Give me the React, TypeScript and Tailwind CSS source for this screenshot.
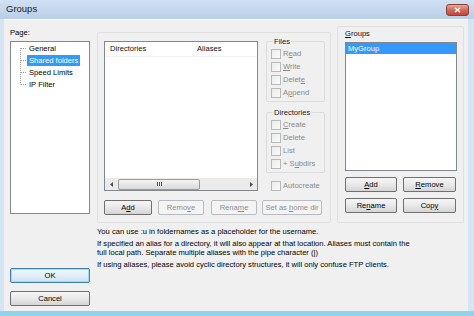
import React from 'react';

type Kids = { children: React.ReactNode };

function U({ children }: Kids) {
  return <span className="underline decoration-[0.5px] underline-offset-[1px]">{children}</span>;
}

function Btn({ children, disabled, main, className = '' }: Kids & { disabled?: boolean; main?: boolean; className?: string }) {
  let look = 'border-[#707070] bg-gradient-to-b from-[#f6f6f6] via-[#e9e9e9] to-[#d5d5d5] text-[#000]';
  if (disabled) look = 'border-[#b9bcbf] bg-[#f4f4f4] text-[#8d8d8d]';
  if (main) look = 'border-[#3c7fb1] bg-gradient-to-b from-[#eef7fd] via-[#e0eef8] to-[#cfe3f3] text-[#000] shadow-[inset_0_0_0_1px_#9fdcf7]';
  return (
    <div className={`flex items-center justify-center h-[15px] rounded-[2px] border leading-[13px] ${look} ${className}`}>
      <span className="whitespace-nowrap">{children}</span>
    </div>
  );
}

function Check({ label }: { label: React.ReactNode }) {
  return (
    <div className="flex items-center h-[13px]">
      <div className="w-[10px] h-[10px] border border-[#b8b8b8] bg-gradient-to-br from-[#ececec] to-[#fafafa]" />
      <span className="ml-[2px] text-[#8a8a8a] whitespace-nowrap">{label}</span>
    </div>
  );
}

function TreeRow({ label, selected, first, last }: { label: string; selected?: boolean; first?: boolean; last?: boolean }) {
  return (
    <div className="flex items-center h-[12px]">
      <svg width="16" height="12" className="shrink-0">
        <line x1="9.5" y1={first ? 6 : 0} x2="9.5" y2={last ? 6.5 : 12} stroke="#a0a0a0" strokeDasharray="1 1" />
        <line x1="10" y1="6.5" x2="16" y2="6.5" stroke="#a0a0a0" strokeDasharray="1 1" />
      </svg>
      <span
        className={`h-[11px] leading-[11px] px-[2px] whitespace-nowrap ${selected ? 'bg-[#3399ff] text-white' : 'text-[#000]'}`}
      >
        {label}
      </span>
    </div>
  );
}

function Arrow({ right }: { right?: boolean }) {
  return (
    <div className="w-[12px] h-full flex items-center justify-center">
      <svg width="3" height="5">
        <polygon points={right ? '0,0 3,2.5 0,5' : '3,0 0,2.5 3,5'} fill="#4a4a4a" />
      </svg>
    </div>
  );
}

export default function App() {
  return (
    <div className="w-[474px] h-[316px] flex flex-col overflow-hidden bg-[#d6e5f4] font-['Liberation_Sans',Arial,sans-serif] text-[7.6px] text-[#000]">
      {/* title bar */}
      <div className="h-[19px] flex items-center justify-between pl-[6px] pr-[5px] bg-gradient-to-b from-[#d0e1f3] to-[#b9cfe8] rounded-t-[3px]">
        <span className="text-[9.5px] text-[#1a1a1a]">Groups</span>
        <div className="w-[23px] h-[12px] rounded-[3px] border border-[#8e3f35] bg-gradient-to-b from-[#e6a79c] via-[#d3685a] to-[#c34634] flex items-center justify-center">
          <svg width="7" height="6">
            <path d="M1 1 L6 5 M6 1 L1 5" stroke="white" strokeWidth="1.6" />
          </svg>
        </div>
      </div>

      <div className="flex-1 flex">
        <div className="w-[4px]" />
        <div className="flex-1 flex bg-[#f0f0f0] border-t border-[#f8fbfe]">
          {/* left column */}
          <div className="ml-[6px] w-[80px] flex flex-col">
            <div className="mt-[8px] leading-[9px]">Page:</div>
            <div className="mt-[4px] h-[173px] border border-[#828790] bg-white">
              <TreeRow label="General" first />
              <TreeRow label="Shared folders" selected />
              <TreeRow label="Speed Limits" />
              <TreeRow label="IP Filter" last />
            </div>
            <Btn main className="mt-[54px]">OK</Btn>
            <Btn className="mt-[8px]">Cancel</Btn>
          </div>

          {/* right column */}
          <div className="ml-[7px] w-[367px] flex flex-col">
            <div className="flex items-start gap-[6px]">
              {/* directories panel */}
              <div className="mt-[12px] w-[234px] h-[191px] border border-[#e0e0e0] rounded-[2px] pl-[6px] pt-[4px] flex flex-col">
                <div className="flex items-start">
                  <div className="mt-[4px] w-[154px] h-[150px] border border-[#828790] bg-white flex flex-col">
                    <div className="h-[15px] flex items-center border-b border-[#f2f2f2] text-[#111]">
                      <div className="w-[87px] pl-[5px]">Directories</div>
                      <div className="pl-[5px]">Aliases</div>
                    </div>
                    <div className="flex-1" />
                    <div className="h-[12px] flex items-center bg-[#ebebeb]">
                      <Arrow />
                      <div className="ml-[1px] w-[82px] h-[11px] rounded-[2px] border border-[#9a9a9a] bg-gradient-to-b from-[#f5f5f5] to-[#d9d9d9] flex items-center justify-center">
                        <svg width="5" height="4">
                          <path d="M0.5 0 V4 M2.5 0 V4 M4.5 0 V4" stroke="#555" strokeWidth="1" />
                        </svg>
                      </div>
                      <div className="flex-1" />
                      <Arrow right />
                    </div>
                  </div>

                  <div className="ml-[8px] w-[59px] flex flex-col">
                    <fieldset className="h-[65px] border border-[#dcdcdc] rounded-[2px] pl-[4px] pt-[1px]">
                      <legend className="ml-[2px] px-[1px] leading-[9px] text-[#222]">Files</legend>
                      <Check label={<>R<U>e</U>ad</>} />
                      <Check label={<><U>W</U>rite</>} />
                      <Check label={<>Delet<U>e</U></>} />
                      <Check label={<>A<U>p</U>pend</>} />
                    </fieldset>
                    <fieldset className="mt-[6px] h-[65px] border border-[#dcdcdc] rounded-[2px] pl-[4px] pt-[1px]">
                      <legend className="ml-[2px] px-[1px] leading-[9px] text-[#222]">Directories</legend>
                      <Check label={<><U>C</U>reate</>} />
                      <Check label="Delete" />
                      <Check label="List" />
                      <Check label={<>+ S<U>u</U>bdirs</>} />
                    </fieldset>
                    <div className="mt-[6px] pl-[5px]">
                      <Check label="Autocreate" />
                    </div>
                  </div>
                </div>

                <div className="mt-[8px] flex">
                  <Btn className="w-[48px]">A<U>d</U>d</Btn>
                  <Btn disabled className="ml-[6px] w-[46px]">Remo<U>v</U>e</Btn>
                  <Btn disabled className="ml-[7px] w-[46px]">Rena<U>m</U>e</Btn>
                  <Btn disabled className="ml-[5px] w-[60px]">Set as <U>h</U>ome dir</Btn>
                </div>
              </div>

              {/* groups panel */}
              <div className="mt-[6px] w-[127px] h-[197px] border border-[#e0e0e0] rounded-[2px] pl-[7px] pt-[2px] flex flex-col">
                <div className="leading-[9px] text-[#111]"><U>G</U>roups</div>
                <div className="mt-[4px] w-[112px] h-[129px] border border-[#828790] bg-white">
                  <div className="h-[11px] leading-[11px] pl-[2px] bg-[#3399ff] text-white">MyGroup</div>
                </div>
                <div className="mt-[6px] flex gap-[6px]">
                  <Btn className="w-[52px]"><U>A</U>dd</Btn>
                  <Btn className="w-[53px]"><U>R</U>emove</Btn>
                </div>
                <div className="mt-[6px] flex gap-[6px]">
                  <Btn className="w-[52px]">Re<U>n</U>ame</Btn>
                  <Btn className="w-[53px]">Cop<U>y</U></Btn>
                </div>
              </div>
            </div>

            <div className="mt-[4px] leading-[9.5px] whitespace-nowrap text-[#000]">
              <p>You can use :u in foldernames as a placeholder for the username.</p>
              <p className="mt-[2px]">
                If specified an alias for a directory, it will also appear at that location. Aliases must contain the
                <br />
                full local path. Separate multiple aliases with the pipe character (|)
              </p>
              <p className="mt-[2px]">If using aliases, please avoid cyclic directory structures, it will only confuse FTP clients.</p>
            </div>
          </div>
        </div>
        <div className="w-[6px]" />
      </div>
      <div className="h-[5px] bg-[#8fd3e8]" />
    </div>
  );
}
